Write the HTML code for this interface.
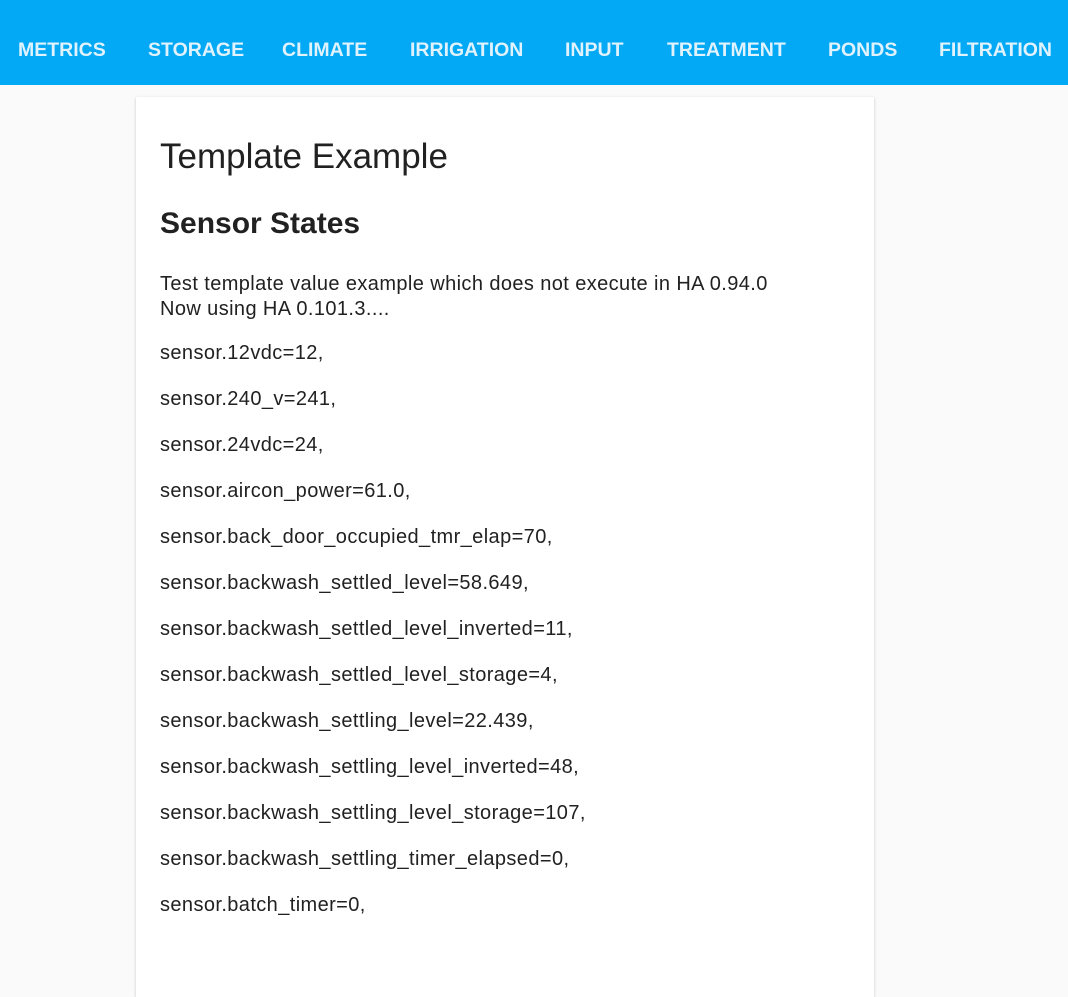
<!DOCTYPE html>
<html><head><style>
body{margin:0;background:#fafafa;font-family:"Liberation Sans",sans-serif;width:1068px;height:933px;overflow:hidden;position:relative}
.hdr{position:absolute;left:0;top:0;width:1068px;height:85px;background:#03a9f4}
.t{position:absolute;top:39px;font-size:19.5px;font-weight:bold;color:#dff2fd;white-space:nowrap;letter-spacing:0}
.card{position:absolute;left:136px;top:97px;width:738px;height:900px;background:#fff;box-shadow:0 1px 3px rgba(0,0,0,.2)}
.c{position:absolute;left:160px;color:#212121;white-space:nowrap}
.p{font-size:20px;letter-spacing:0.4px}
</style></head><body>
<div class="hdr">
<span class="t" style="left:18px">METRICS</span>
<span class="t" style="left:148px">STORAGE</span>
<span class="t" style="left:282px">CLIMATE</span>
<span class="t" style="left:410px">IRRIGATION</span>
<span class="t" style="left:565px">INPUT</span>
<span class="t" style="left:667px">TREATMENT</span>
<span class="t" style="left:828px">PONDS</span>
<span class="t" style="left:939px">FILTRATION</span>
</div>
<div class="card"></div>
<div class="c" style="top:137px;font-size:35px">Template Example</div>
<div class="c" style="top:207px;font-size:30px;font-weight:bold">Sensor States</div>
<div class="c p" style="top:272px;line-height:25px">Test template value example which does not execute in HA 0.94.0<br>Now using HA 0.101.3....</div>
<div class="c p" style="top:342px">sensor.12vdc=12,</div>
<div class="c p" style="top:388px">sensor.240_v=241,</div>
<div class="c p" style="top:434px">sensor.24vdc=24,</div>
<div class="c p" style="top:480px">sensor.aircon_power=61.0,</div>
<div class="c p" style="top:526px">sensor.back_door_occupied_tmr_elap=70,</div>
<div class="c p" style="top:572px">sensor.backwash_settled_level=58.649,</div>
<div class="c p" style="top:618px">sensor.backwash_settled_level_inverted=11,</div>
<div class="c p" style="top:664px">sensor.backwash_settled_level_storage=4,</div>
<div class="c p" style="top:710px">sensor.backwash_settling_level=22.439,</div>
<div class="c p" style="top:756px">sensor.backwash_settling_level_inverted=48,</div>
<div class="c p" style="top:802px">sensor.backwash_settling_level_storage=107,</div>
<div class="c p" style="top:848px">sensor.backwash_settling_timer_elapsed=0,</div>
<div class="c p" style="top:894px">sensor.batch_timer=0,</div>
</body></html>
